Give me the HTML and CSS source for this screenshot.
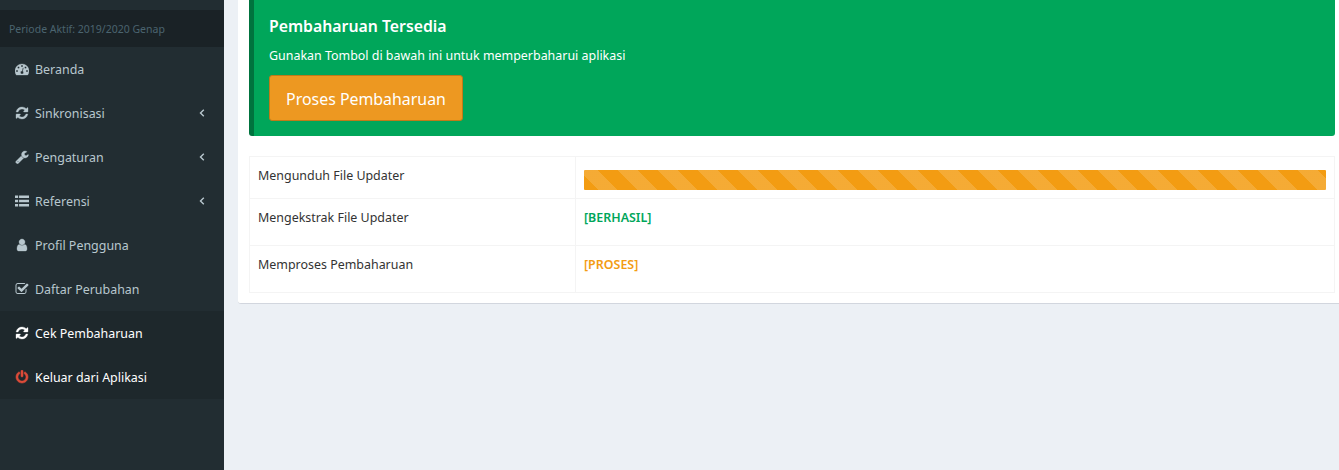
FILE: index.html
```html
<!DOCTYPE html>
<html lang="id">
<head>
<meta charset="utf-8">
<title>Cek Pembaharuan</title>
<link rel="stylesheet" href="styles.css">
</head>
<body>
<svg class="defs" width="0" height="0" aria-hidden="true">
  <symbol id="i-dash" viewBox="0 0 1792 1792"><path d="M384 1152q0-53-37.500-90.500t-90.500-37.500-90.500 37.500-37.500 90.500 37.500 90.500 90.500 37.500 90.500-37.500 37.500-90.500zm192-448q0-53-37.500-90.500t-90.500-37.500-90.500 37.500-37.500 90.500 37.500 90.500 90.500 37.500 90.500-37.500 37.500-90.500zm428 481l101-382q6-26-7.500-48.500t-38.500-29.500-48 6.500-30 39.500l-101 382q-60 5-107 43.500t-63 98.500q-20 77 20 146t117 89 146-20 89-117q16-60-6-117t-72-91zm660-33q0-53-37.500-90.500t-90.500-37.500-90.500 37.500-37.500 90.500 37.500 90.500 90.500 37.500 90.500-37.500 37.500-90.500zm-640-640q0-53-37.500-90.500t-90.500-37.500-90.500 37.500-37.500 90.500 37.500 90.500 90.500 37.500 90.500-37.500 37.500-90.500zm448 192q0-53-37.500-90.500t-90.500-37.500-90.500 37.500-37.500 90.500 37.500 90.500 90.500 37.500 90.500-37.500 37.500-90.500zm320 448q0 261-141 483-19 29-54 29h-1402q-35 0-54-29-141-221-141-483 0-182 71-348t191-286 286-191 348-71 348 71 286 191 191 286 71 348z"/></symbol>
  <symbol id="i-refresh" viewBox="0 0 1792 1792"><path d="M1639 1056q0 5-1 7-64 268-268 434.500t-478 166.500q-146 0-282.500-55t-243.500-157l-129 129q-19 19-45 19t-45-19-19-45v-448q0-26 19-45t45-19h448q26 0 45 19t19 45-19 45l-137 137q71 66 161 102t187 36q134 0 250-65t186-179q11-17 53-117 8-23 30-23h192q13 0 22.500 9.500t9.500 22.500zm25-800v448q0 26-19 45t-45 19h-448q-26 0-45-19t-19-45 19-45l138-138q-148-137-349-137-134 0-250 65t-186 179q-11 17-53 117-8 23-30 23h-199q-13 0-22.500-9.500t-9.500-22.500v-7q65-268 270-434.500t480-166.500q146 0 284 55.500t245 156.500l130-129q19-19 45-19t45 19 19 45z"/></symbol>
  <symbol id="i-wrench" viewBox="0 0 1792 1792"><path d="M448 1472q0-26-19-45t-45-19-45 19-19 45 19 45 45 19 45-19 19-45zm644-420l-682 682q-37 37-90 37-52 0-91-37l-106-108q-38-36-38-90 0-53 38-91l681-681q39 98 114.500 173.500t173.500 114.500zm634-435q0 39-23 106-47 134-164.500 217.500t-258.500 83.500q-185 0-316.500-131.500t-131.500-316.500 131.500-316.500 316.500-131.500q58 0 121.500 16.500t107.500 46.500q16 11 16 28t-16 28l-293 169v224l193 107q5-3 79-48.500t135.500-81 70.500-35.500q15 0 23.500 10t8.500 25z"/></symbol>
  <symbol id="i-list" viewBox="0 0 1792 1792"><path d="M0 200h400v320H0zM0 740h400v320H0zM0 1280h400v320H0zM520 200h1272v320H520zM520 740h1272v320H520zM520 1280h1272v320H520z"/></symbol>
  <symbol id="i-user" viewBox="0 0 1792 1792"><path d="M1536 1399q0 109-62.500 187t-150.500 78h-854q-88 0-150.500-78t-62.500-187q0-85 8.500-160.500t31.500-152 58.500-131 94-89 134.500-34.500q131 128 313 128t313-128q76 0 134.500 34.500t94 89 58.500 131 31.500 152 8.500 160.500zm-256-887q0 159-112.500 271.500t-271.500 112.500-271.500-112.500-112.500-271.500 112.500-271.500 271.500-112.500 271.500 112.500 112.500 271.500z"/></symbol>
  <symbol id="i-check" viewBox="0 0 1792 1792"><path d="M1472 930v318q0 119-84.500 203.500t-203.500 84.500h-832q-119 0-203.500-84.500t-84.500-203.500v-832q0-119 84.500-203.500t203.500-84.500h832q63 0 117 25 15 7 18 23 3 17-9 29l-49 49q-10 10-23 10-3 0-9-2-23-6-45-6h-832q-66 0-113 47t-47 113v832q0 66 47 113t113 47h832q66 0 113-47t47-113v-254q0-13 9-22l64-64q10-10 23-10 6 0 12 3 20 8 20 29zm231-489l-814 814q-24 24-57 24t-57-24l-430-430q-24-24-24-57t24-57l110-110q24-24 57-24t57 24l263 263 647-647q24-24 57-24t57 24l110 110q24 24 24 57t-24 57z"/></symbol>
  <symbol id="i-power" viewBox="0 0 1792 1792"><path d="M1664 896q0 156-61 298t-164 245-245 164-298 61-298-61-245-164-164-245-61-298q0-182 80.500-343t226.500-270q43-32 95.500-25t83.500 50q32 42 24.500 94.500t-49.500 84.500q-98 74-151.500 181t-53.500 228q0 104 40.500 198.500t109.500 163.500 163.500 109.500 198.500 40.500 198.500-40.500 163.500-109.500 109.500-163.500 40.500-198.500q0-121-53.500-228t-151.500-181q-42-32-49.500-84.500t24.500-94.500q31-43 84-50t95 25q146 109 226.500 270t80.500 343zm-640-768v640q0 52-38 90t-90 38-90-38-38-90v-640q0-52 38-90t90-38 90 38 38 90z"/></symbol>
  <symbol id="i-angle" viewBox="0 0 6 8"><path d="M4.800 .8 1.500 4 4.800 7.200" fill="none" stroke="currentColor" stroke-width="1.400"/></symbol>
</svg>
<div class="app">
  <aside class="sidebar">
    <div class="period">Periode Aktif: 2019/2020 Genap</div>
    <nav class="menu">
      <a class="item"><svg class="icon bold"><use href="#i-dash"/></svg><span class="label">Beranda</span></a>
      <a class="item"><svg class="icon bold"><use href="#i-refresh"/></svg><span class="label">Sinkronisasi</span><svg class="angle"><use href="#i-angle"/></svg></a>
      <a class="item"><svg class="icon bold"><use href="#i-wrench"/></svg><span class="label">Pengaturan</span><svg class="angle"><use href="#i-angle"/></svg></a>
      <a class="item"><svg class="icon"><use href="#i-list"/></svg><span class="label">Referensi</span><svg class="angle"><use href="#i-angle"/></svg></a>
      <a class="item"><svg class="icon bold"><use href="#i-user"/></svg><span class="label">Profil Pengguna</span></a>
      <a class="item"><svg class="icon"><use href="#i-check"/></svg><span class="label">Daftar Perubahan</span></a>
      <a class="item active"><svg class="icon bold"><use href="#i-refresh"/></svg><span class="label">Cek Pembaharuan</span></a>
      <a class="item active"><svg class="icon power"><use href="#i-power"/></svg><span class="label">Keluar dari Aplikasi</span></a>
    </nav>
  </aside>
  <main class="content">
    <section class="box">
      <div class="callout">
        <h4 class="callout-title">Pembaharuan Tersedia</h4>
        <p class="callout-text">Gunakan Tombol di bawah ini untuk memperbaharui aplikasi</p>
        <button class="btn" type="button">Proses Pembaharuan</button>
      </div>
      <table class="status">
        <tr class="row-1"><td class="name">Mengunduh File Updater</td><td class="val"><div class="progress"></div></td></tr>
        <tr class="row-2"><td class="name">Mengekstrak File Updater</td><td class="val"><span class="ok">[BERHASIL]</span></td></tr>
        <tr class="row-3"><td class="name">Memproses Pembaharuan</td><td class="val"><span class="wait">[PROSES]</span></td></tr>
      </table>
    </section>
  </main>
</div>
</body>
</html>
```
FILE: styles.css
```css
* { box-sizing: border-box; }
html, body { margin: 0; height: 100%; overflow: hidden; }
body { font-family: "Noto Sans", "Liberation Sans", sans-serif; font-size: 12.450px; color: #333; background: #ecf0f5; }
.defs { display: block; height: 0; }
.app { display: flex; height: 470px; }

.sidebar { width: 224px; flex: none; background: #222d32; padding-top: 10px; }
.period { height: 37px; line-height: 37px; padding: 1px 0 0 9px; background: #1a2226; color: #4b646f; font-size: 10.500px; }
.menu { display: flex; flex-direction: column; }
.item { display: flex; align-items: center; height: 44px; padding: 0 19px 0 15px; color: #b8c7ce; }
.item.active { background: #1e282c; color: #fff; }
.icon { width: 14px; height: 14px; fill: currentColor; flex: none; }
.icon.bold { stroke: currentColor; stroke-width: 40; }
.icon.power { fill: #dd4b39; stroke: #dd4b39; stroke-width: 70; }
.label { margin-left: 6px; flex: 1; }
.angle { width: 6px; height: 8px; flex: none; }

.content { flex: 1; min-width: 0; padding-left: 14px; }
.box { background: #fff; height: 304px; padding: 0 4px 0 11px; border-bottom: 1px solid #d2d6de; border-radius: 0 0 0 3px; }
.callout { height: 136px; background: #00a65a; border-left: 5px solid #00733e; border-radius: 0 0 3px 3px; padding: 16px 15px 0; color: #fff; }
.callout-title { margin: 0; font-size: 15.800px; line-height: 20px; font-weight: 600; }
.callout-text { margin: 10px 0 0; font-size: 12.450px; line-height: 20px; }
.btn { display: block; margin-top: 9px; width: 194px; height: 46px; background: #ed9821; border: 1px solid #c07a18; border-radius: 3px; color: #fff; font-family: inherit; font-size: 15.900px; padding: 1px 0 0; }

.status { width: 1086px; margin-top: 20px; border-collapse: collapse; border: 1px solid #f4f4f4; table-layout: fixed; }
.status td { border: 1px solid #f4f4f4; padding: 9px 8px 8px; vertical-align: top; line-height: 20px; }
.name { width: 326px; color: #333; }
.row-1 { height: 42px; }
.row-2 { height: 47px; }
.row-3 { height: 47px; }
.status .row-1 .val { padding-top: 13px; }
.progress { height: 20px; border-radius: 1px; background-color: #f39c12; background-image: repeating-linear-gradient(45deg, transparent 0, transparent 9.900px, rgba(255,255,255,.15) 9.900px, rgba(255,255,255,.15) 24.040px, transparent 24.040px, transparent 28.280px); }
.ok { color: #00a65a; font-weight: 600; }
.wait { color: #f39c12; font-weight: 600; }
```
